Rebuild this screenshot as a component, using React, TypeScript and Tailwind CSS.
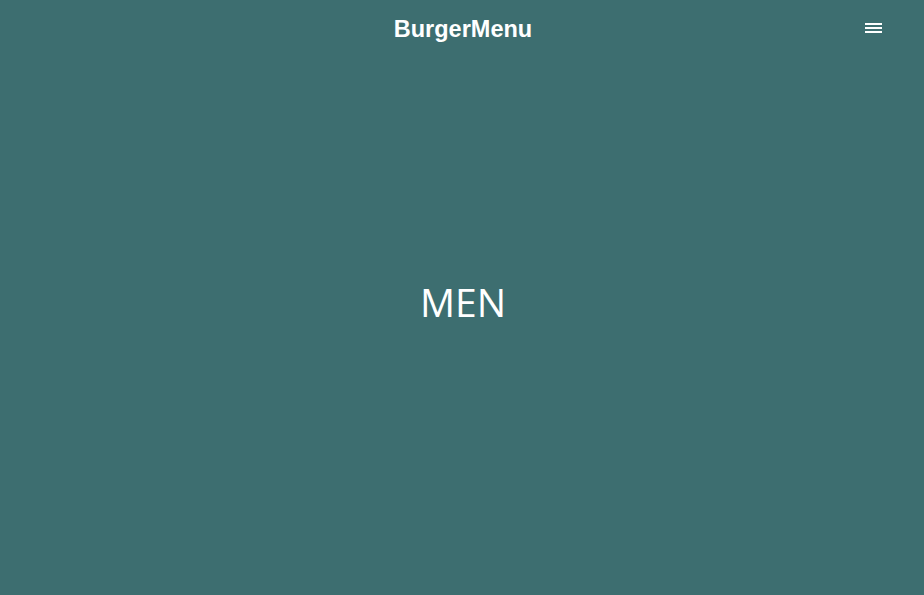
import React from "react";

// ── Burger icon ───────────────────────────────────────────────────────────────
const BurgerIcon: React.FC = () => (
  <button className="flex flex-col gap-[2px] w-[17px]" aria-label="menu">
    <span className="block h-[2px] w-full bg-white" />
    <span className="block h-[2px] w-full bg-white" />
    <span className="block h-[2px] w-full bg-white" />
  </button>
);

// ── Header ────────────────────────────────────────────────────────────────────
const Header: React.FC = () => (
  <header className="absolute top-0 left-0 right-0 h-[59px] flex items-center justify-center">
    <h1
      className="text-white font-bold text-[23.5px] leading-none pl-[2px]"
      style={{ fontFamily: '"Liberation Sans", Arial, sans-serif' }}
    >
      BurgerMenu
    </h1>
    <div className="absolute right-[42px] top-[23px]">
      <BurgerIcon />
    </div>
  </header>
);

export default function App() {
  return (
    <div className="relative w-full h-[595px] bg-[#3d6e70] overflow-hidden">
      <Header />
      <main className="h-full flex items-center justify-center">
        <h2
          className="text-white text-[39px] leading-none pt-[8px] pl-[2px]"
          style={{ fontFamily: '"Open Sans", "Noto Sans", sans-serif' }}
        >
          MEN
        </h2>
      </main>
    </div>
  );
}
